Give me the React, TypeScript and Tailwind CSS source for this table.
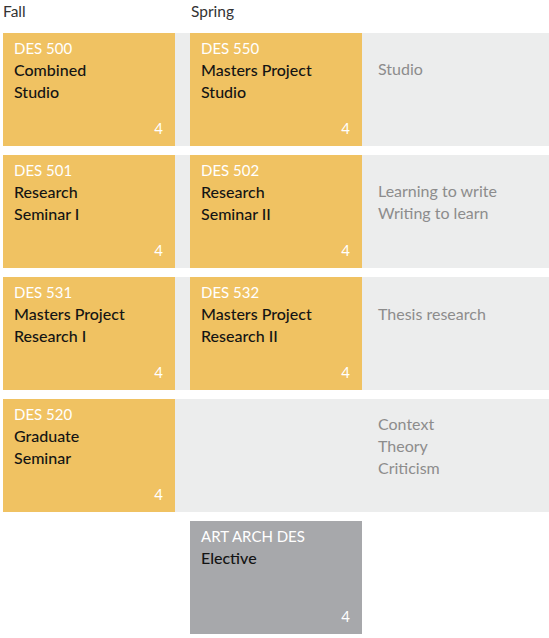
const font = { fontFamily: 'Lato, "Noto Sans", sans-serif' }

type Course = { code: string; title: string[]; credits: number }

const rows: { fall: Course; spring?: Course; notes: string[]; notesPad: string }[] = [
  {
    fall: { code: 'DES 500', title: ['Combined', 'Studio'], credits: 4 },
    spring: { code: 'DES 550', title: ['Masters Project', 'Studio'], credits: 4 },
    notes: ['Studio'],
    notesPad: 'pt-[25px]',
  },
  {
    fall: { code: 'DES 501', title: ['Research', 'Seminar I'], credits: 4 },
    spring: { code: 'DES 502', title: ['Research', 'Seminar II'], credits: 4 },
    notes: ['Learning to write', 'Writing to learn'],
    notesPad: 'pt-[25px]',
  },
  {
    fall: { code: 'DES 531', title: ['Masters Project', 'Research I'], credits: 4 },
    spring: { code: 'DES 532', title: ['Masters Project', 'Research II'], credits: 4 },
    notes: ['Thesis research'],
    notesPad: 'pt-[26px]',
  },
  {
    fall: { code: 'DES 520', title: ['Graduate', 'Seminar'], credits: 4 },
    notes: ['Context', 'Theory', 'Criticism'],
    notesPad: 'pt-[14px]',
  },
]

function Card({ c, gray }: { c: Course; gray?: boolean }) {
  return (
    <div
      className={`flex h-[113px] w-[172px] shrink-0 flex-col pl-[11px] pr-[12px] pt-[4px] pb-[7px] leading-[22px] ${
        gray ? 'bg-[#a7a8ab]' : 'bg-[#f0c262]'
      }`}
    >
      <p className="text-[15px] text-white">{c.code}</p>
      {c.title.map((t) => (
        <p key={t} className="text-[16px] font-medium text-[#141414]">
          {t}
        </p>
      ))}
      <p className="mt-auto text-right text-[15px] text-white">{c.credits}</p>
    </div>
  )
}

export default function App() {
  return (
    <div className="h-[638px] w-[549px] overflow-hidden bg-white" style={font}>
      <div className="flex h-[33px] pt-[0px] text-[15.5px] leading-[22px] text-[#333]">
        <p className="w-[191px] pl-[3px]">Fall</p>
        <p>Spring</p>
      </div>

      <div className="flex flex-col gap-[9px]">
        {rows.map((r) => (
          <div key={r.fall.code} className="ml-[3px] flex h-[113px]">
            <Card c={r.fall} />
            <div className="flex flex-1 bg-[#eceded]">
              <div className="w-[15px] shrink-0" />
              {r.spring ? <Card c={r.spring} /> : <div className="w-[172px] shrink-0" />}
              <div className={`pl-[16px] text-[16px] leading-[22px] text-[#8c8c8c] ${r.notesPad}`}>
                {r.notes.map((n) => (
                  <p key={n}>{n}</p>
                ))}
              </div>
            </div>
          </div>
        ))}

        <div className="ml-[190px] flex">
          <Card c={{ code: 'ART ARCH DES', title: ['Elective'], credits: 4 }} gray />
        </div>
      </div>
    </div>
  )
}
